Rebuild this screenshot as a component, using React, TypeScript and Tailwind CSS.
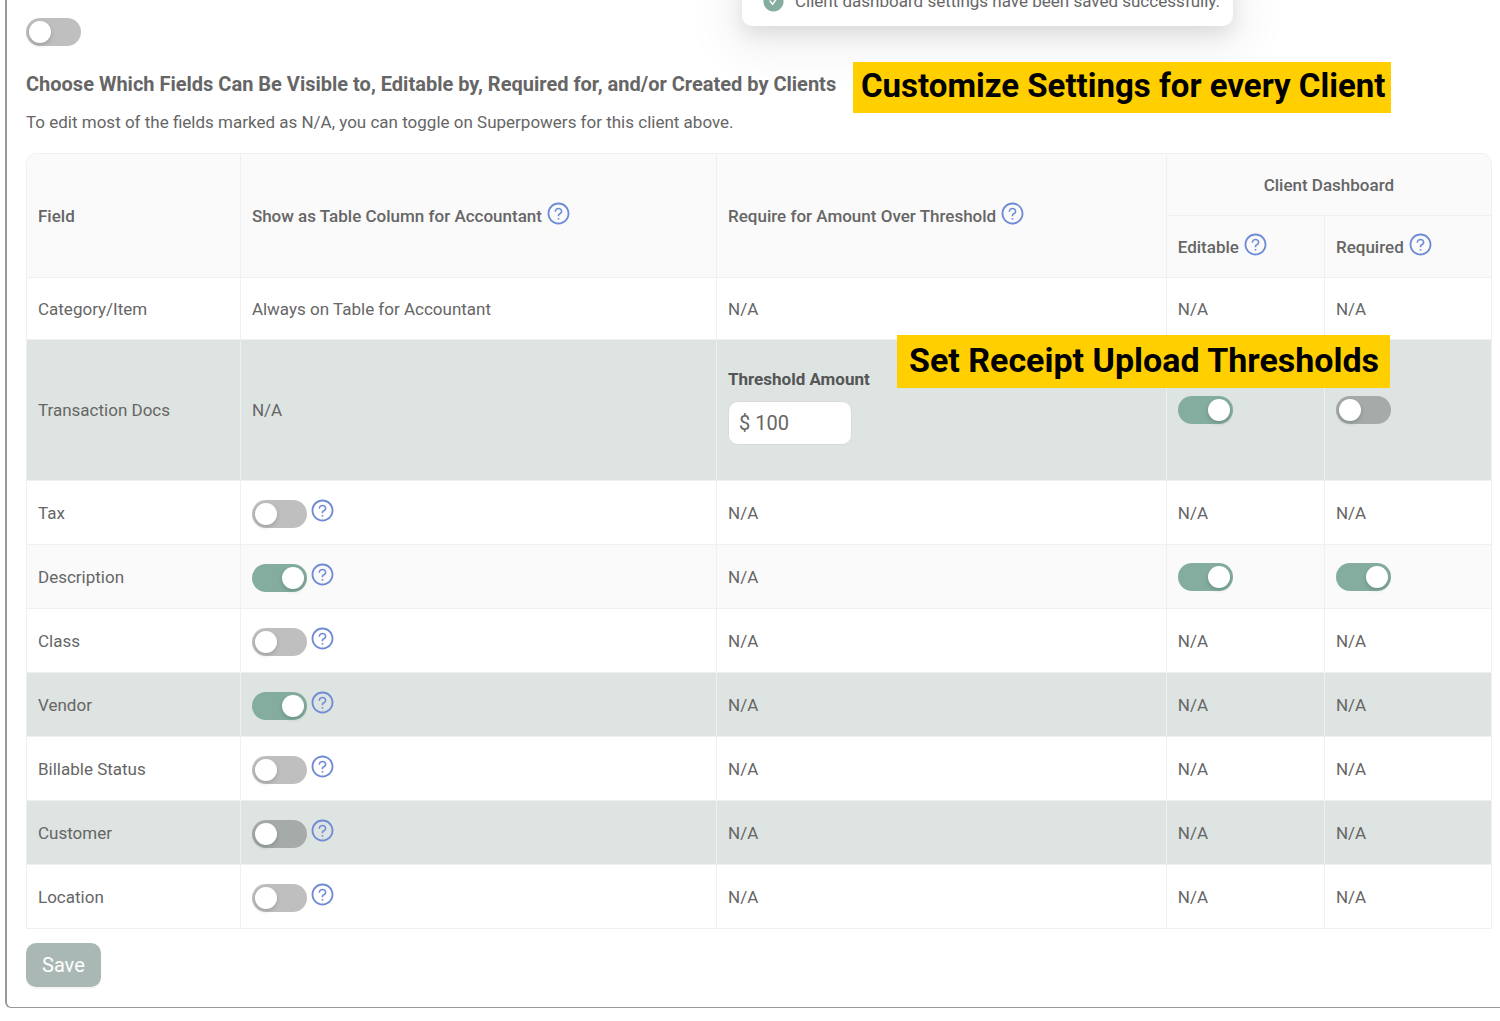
import { useState } from 'react';
import { AiFillCheckCircle, AiOutlineQuestionCircle } from 'react-icons/ai';

type Cell = 'N/A' | 'Always on Table for Accountant' | boolean;

interface FieldRow {
  name: string;
  column: Cell;
  threshold?: number;
  editable: Cell;
  required: Cell;
  tone?: 'green' | 'gray';
}

const FIELDS: FieldRow[] = [
  { name: 'Category/Item', column: 'Always on Table for Accountant', editable: 'N/A', required: 'N/A' },
  { name: 'Transaction Docs', column: 'N/A', threshold: 100, editable: true, required: false, tone: 'green' },
  { name: 'Tax', column: false, editable: 'N/A', required: 'N/A' },
  { name: 'Description', column: true, editable: true, required: true, tone: 'gray' },
  { name: 'Class', column: false, editable: 'N/A', required: 'N/A' },
  { name: 'Vendor', column: true, editable: 'N/A', required: 'N/A', tone: 'green' },
  { name: 'Billable Status', column: false, editable: 'N/A', required: 'N/A' },
  { name: 'Customer', column: false, editable: 'N/A', required: 'N/A', tone: 'green' },
  { name: 'Location', column: false, editable: 'N/A', required: 'N/A' },
];

const rowHeight = (row: FieldRow) => {
  if (row.threshold !== undefined) return 'h-[141px]';
  return typeof row.column === 'boolean' ? 'h-16' : 'h-[62px]';
};

const rowTone = (row: FieldRow) => {
  if (row.tone === 'green') return 'bg-[#dde4e1]';
  return row.tone === 'gray' ? 'bg-[#fafafa]' : 'bg-white';
};

const th = 'border-r border-b border-[#f0f0f0] px-[11px] text-left font-medium';
const td = 'border-r border-b border-[#f0f0f0] px-[11px]';

function Toggle({ label, initial = false }: { label: string; initial?: boolean }) {
  const [on, setOn] = useState(initial);

  return (
    <input
      type="checkbox"
      role="switch"
      aria-label={label}
      checked={on}
      onChange={(e) => setOn(e.target.checked)}
      className="block h-7 w-[55px] shrink-0 cursor-pointer appearance-none rounded-full bg-black/25 p-[3px] before:block before:size-[22px] before:rounded-full before:bg-white before:shadow-[0_2px_4px_rgba(0,35,11,0.2)] checked:bg-[#84ada0] checked:before:ml-[27px]"
    />
  );
}

function Help({ label }: { label: string }) {
  return (
    <button type="button" aria-label={`Help: ${label}`} className="block shrink-0 cursor-pointer self-start text-[#6f8bd6]">
      <AiOutlineQuestionCircle className="size-[25px]" />
    </button>
  );
}

function HeadLabel({ text }: { text: string }) {
  return (
    <div className="flex items-center gap-1">
      <span>{text}</span>
      <span className="pb-1">
        <Help label={text} />
      </span>
    </div>
  );
}

function Value({ value, label }: { value: Cell; label: string }) {
  if (typeof value === 'boolean') return <Toggle label={label} initial={value} />;
  return <>{value}</>;
}

export default function ClientSettings() {
  const [amount, setAmount] = useState('$ 100');

  return (
    <div className="relative min-h-screen overflow-hidden bg-white pl-[5px] font-['Roboto','Liberation_Sans',sans-serif] text-[17px] leading-6 text-[#666]">
      <main className="rounded-bl-md border-b border-l-2 border-[#999] pt-[18px] pr-2 pb-5 pl-[19px]">
        <Toggle label="Superpowers" />

        <h2 className="mt-6 text-xl leading-7 font-bold">
          Choose Which Fields Can Be Visible to, Editable by, Required for, and/or Created by Clients
        </h2>
        <p className="mt-3">To edit most of the fields marked as N/A, you can toggle on Superpowers for this client above.</p>

        <div className="mt-[19px] overflow-hidden rounded-t-[10px] border-t border-l border-[#f0f0f0]">
          <table className="w-full table-fixed border-separate border-spacing-0">
            <colgroup>
              <col className="w-[14.6%]" />
              <col className="w-[32.5%]" />
              <col className="w-[30.7%]" />
              <col className="w-[10.8%]" />
              <col />
            </colgroup>
            <thead className="bg-[#fafafa]">
              <tr className="h-[62px]">
                <th rowSpan={2} className={th}>Field</th>
                <th rowSpan={2} className={th}>
                  <HeadLabel text="Show as Table Column for Accountant" />
                </th>
                <th rowSpan={2} className={th}>
                  <HeadLabel text="Require for Amount Over Threshold" />
                </th>
                <th colSpan={2} className="rounded-tr-[10px] border-r border-b border-[#f0f0f0] font-medium">
                  Client Dashboard
                </th>
              </tr>
              <tr className="h-[62px]">
                <th className={th}>
                  <HeadLabel text="Editable" />
                </th>
                <th className={th}>
                  <HeadLabel text="Required" />
                </th>
              </tr>
            </thead>
            <tbody>
              {FIELDS.map((row) => (
                <tr key={row.name} className={`${rowHeight(row)} ${rowTone(row)}`}>
                  <td className={td}>{row.name}</td>
                  <td className={td}>
                    {typeof row.column === 'boolean' ? (
                      <div className="flex h-[30px] gap-[3px]">
                        <div className="self-end">
                          <Toggle label={`Show ${row.name} as table column`} initial={row.column} />
                        </div>
                        <Help label={row.name} />
                      </div>
                    ) : (
                      row.column
                    )}
                  </td>
                  <td className={td}>
                    {row.threshold !== undefined ? (
                      <div className="pb-2">
                        <label htmlFor="threshold" className="block font-bold text-[#555]">
                          Threshold Amount
                        </label>
                        <input
                          id="threshold"
                          type="text"
                          value={amount}
                          onChange={(e) => setAmount(e.target.value)}
                          className="mt-2.5 block h-11 w-[124px] rounded-[10px] border border-[#d9d9d9] bg-white px-2.5 text-xl"
                        />
                      </div>
                    ) : (
                      'N/A'
                    )}
                  </td>
                  <td className={td}>
                    <Value value={row.editable} label={`${row.name} editable`} />
                  </td>
                  <td className={td}>
                    <Value value={row.required} label={`${row.name} required`} />
                  </td>
                </tr>
              ))}
            </tbody>
          </table>
        </div>

        <button
          type="button"
          className="mt-3.5 block h-11 cursor-pointer rounded-[10px] bg-[#a9b8b4] px-4 text-xl text-white shadow-[0_2px_0_rgba(0,0,0,0.04)]"
        >
          Save
        </button>
      </main>

      <div
        role="status"
        className="absolute -top-6 left-[742px] flex h-[50px] w-[491px] items-center gap-2.5 rounded-[10px] bg-white pl-5 whitespace-nowrap shadow-[0_8px_20px_rgba(0,0,0,0.1),0_12px_48px_16px_rgba(0,0,0,0.05)]"
      >
        <AiFillCheckCircle className="size-[23px] text-[#84ada0]" />
        Client dashboard settings have been saved successfully.
      </div>

      {/* callouts */}
      <div className="absolute top-[62px] left-[853px] flex h-[51px] w-[538px] items-center bg-[#ffcf00] px-2 pb-1 text-[33px] font-bold whitespace-nowrap text-black">
        Customize Settings for every Client
      </div>
      <div className="absolute top-[335px] left-[897px] flex h-[53px] w-[493px] items-center bg-[#ffcf00] px-3 pb-1 text-[34px] font-bold whitespace-nowrap text-black">
        Set Receipt Upload Thresholds
      </div>
    </div>
  );
}
